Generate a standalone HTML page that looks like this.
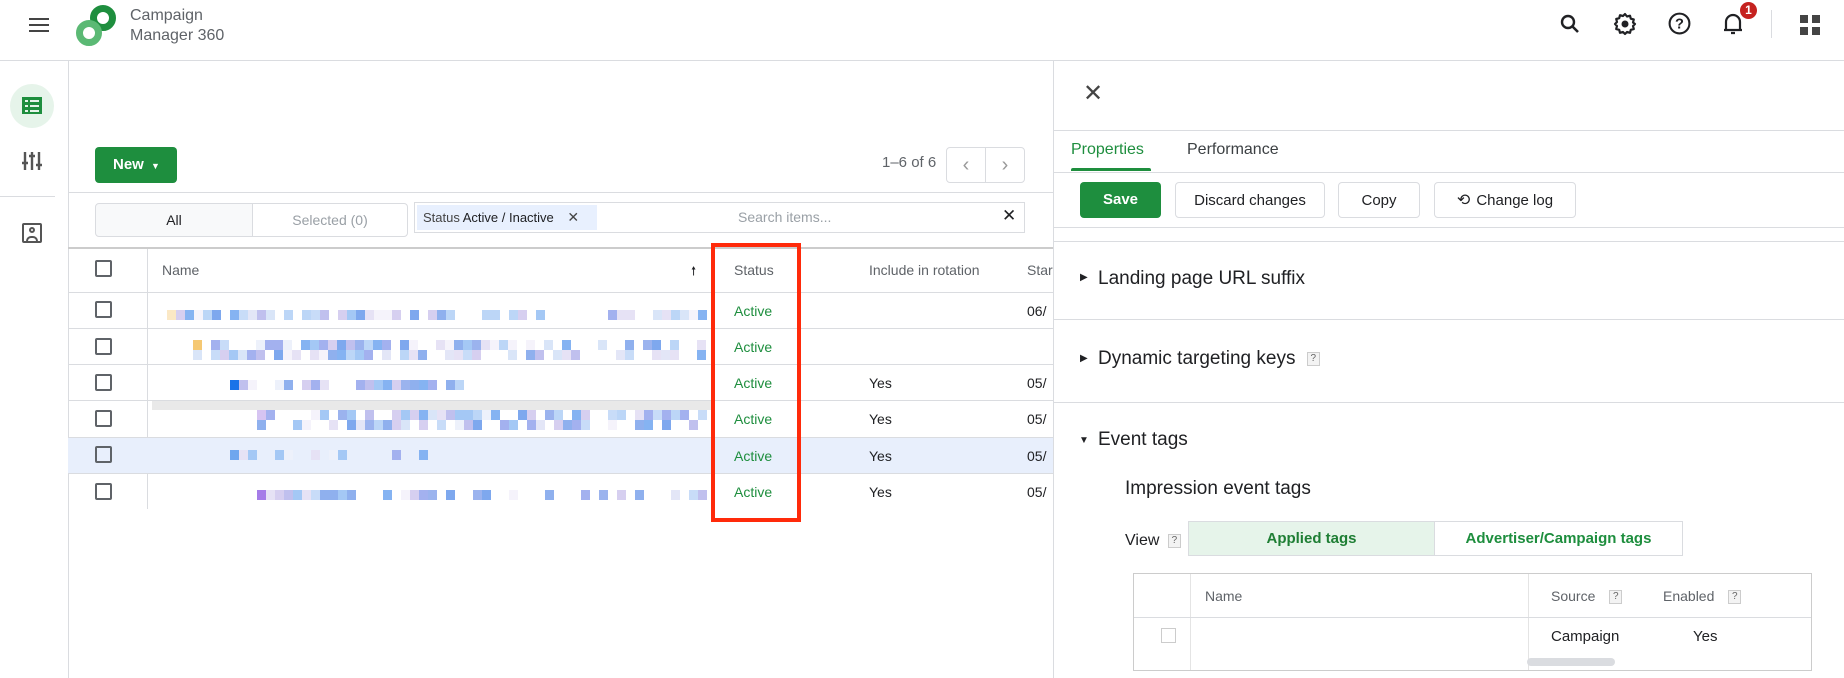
<!DOCTYPE html>
<html><head><meta charset="utf-8"><style>
*{box-sizing:border-box;margin:0;padding:0}
body{width:1844px;height:678px;overflow:hidden;background:#fff;font-family:"Liberation Sans",Arial,sans-serif;color:#202124;position:relative}
.a{position:absolute}
.hl{position:absolute;height:1px;background:#dadce0}
.vl{position:absolute;width:1px;background:#dadce0}
.cb{position:absolute;width:17px;height:17px;border:2px solid #5f6368;border-radius:2px}
.btn{position:absolute;border:1px solid #dadce0;border-radius:4px;font-size:15px;display:flex;align-items:center;justify-content:center;color:#202124;background:#fff}
.act{position:absolute;left:734px;color:#1e8e3e;font-size:14px}
.yes{position:absolute;left:869px;font-size:14px}
.dt{position:absolute;left:1027px;font-size:14px}
.q{display:inline-block;width:13px;height:14px;border:1px solid #ccc;background:#f3f3f3;font-size:10px;color:#666;text-align:center;line-height:12px;vertical-align:middle}
.px{position:absolute;height:10px}
</style></head><body>
<div class="a" style="left:29px;top:18px;width:20px;height:2px;background:#444;box-shadow:0 6px 0 #444,0 12px 0 #444"></div>
<svg class="a" style="left:74px;top:4px" width="44" height="44" viewBox="0 0 44 44"><circle cx="29" cy="14" r="9.5" fill="none" stroke="#1e8e3e" stroke-width="7"/><circle cx="15" cy="29" r="9.5" fill="none" stroke="#5bb974" stroke-width="7"/></svg>
<div class="a" style="left:130px;top:6px;font-size:16px;color:#5f6368;line-height:20px">Campaign<br>Manager 360</div>
<svg class="a" style="left:1558px;top:12px" width="24" height="24" viewBox="0 0 24 24"><circle cx="10" cy="10" r="6" fill="none" stroke="#202124" stroke-width="2.4"/><path d="M14.5 14.5L20 20" stroke="#202124" stroke-width="2.6"/></svg>
<svg class="a" style="left:1613px;top:12px" width="24" height="24" viewBox="0 0 24 24"><path d="M12 2l2 2.5 3-.8.8 3 3 .8-.8 3L22 12l-2 2 .8 3-3 .8-.8 3-3-.8L12 22l-2-2-3 .8-.8-3-3-.8.8-3L2 12l2-2-.8-3 3-.8.8-3 3 .8z" fill="none" stroke="#202124" stroke-width="2.2" stroke-linejoin="round"/><circle cx="12" cy="12" r="3.5" fill="#202124"/></svg>
<svg class="a" style="left:1667px;top:11px" width="25" height="25" viewBox="0 0 24 24"><circle cx="12" cy="12" r="9.5" fill="none" stroke="#202124" stroke-width="2"/><text x="12" y="17" font-size="14" font-weight="bold" text-anchor="middle" font-family="Liberation Sans" fill="#202124">?</text></svg>
<svg class="a" style="left:1721px;top:11px" width="24" height="26" viewBox="0 0 24 26"><path d="M5 19V11a7 7 0 0114 0v8H5zM3 19h18M10 22h4" fill="none" stroke="#202124" stroke-width="2.2"/></svg>
<div class="a" style="left:1740px;top:2px;width:17px;height:17px;border-radius:50%;background:#c5221f;color:#fff;font-size:12px;font-weight:bold;text-align:center;line-height:17px">1</div>
<div class="vl" style="left:1771px;top:10px;height:28px"></div>
<div class="a" style="left:1800px;top:15px;width:8px;height:8px;background:#444;box-shadow:12px 0 0 #444,0 12px 0 #444,12px 12px 0 #444"></div>
<div class="hl" style="left:0;top:60px;width:1844px"></div>
<div class="vl" style="left:68px;top:60px;height:618px"></div>
<div class="a" style="left:10px;top:84px;width:44px;height:44px;border-radius:50%;background:#e6f4ea"></div>
<div class="a" style="left:22px;top:97px;width:20px;height:17px;background:#1e8e3e"></div>
<div class="a" style="left:25px;top:100px;width:3px;height:2px;background:#e6f4ea;box-shadow:0 5px 0 #e6f4ea,0 10px 0 #e6f4ea"></div>
<div class="a" style="left:30px;top:100px;width:9px;height:2px;background:#e6f4ea;box-shadow:0 5px 0 #e6f4ea,0 10px 0 #e6f4ea"></div>
<svg class="a" style="left:21px;top:150px" width="22" height="22" viewBox="0 0 22 22"><path d="M4 2v18M11 2v18M18 2v18" stroke="#555" stroke-width="2.4"/><path d="M1 13h6M8 6h6M15 15h6" stroke="#555" stroke-width="2.6"/></svg>
<div class="hl" style="left:0;top:196px;width:55px"></div>
<div class="a" style="left:22px;top:223px;width:20px;height:20px;border:2px solid #555;border-radius:2px"></div>
<div class="a" style="left:29px;top:227px;width:6px;height:6px;border:2px solid #555;border-radius:50%"></div>
<div class="a" style="left:26px;top:236px;width:12px;height:5px;border:2px solid #555;border-bottom:none;border-radius:5px 5px 0 0"></div>
<div class="a" style="left:95px;top:147px;width:82px;height:36px;background:#1e8e3e;border-radius:4px;color:#fff;font-weight:bold;font-size:15px;line-height:36px;padding-left:18px">New <span style="font-size:9px;margin-left:3px">▼</span></div>
<div class="a" style="left:882px;top:154px;font-size:15px;color:#5f6368">1–6 of 6</div>
<div class="btn" style="left:946px;top:147px;width:40px;height:36px;border-radius:4px 0 0 4px;color:#999;font-size:20px">‹</div>
<div class="btn" style="left:985px;top:147px;width:40px;height:36px;border-radius:0 4px 4px 0;color:#999;font-size:20px">›</div>
<div class="hl" style="left:68px;top:192px;width:985px"></div>
<div class="a" style="left:95px;top:203px;width:158px;height:34px;background:#f8f9fa;border:1px solid #dadce0;border-radius:4px 0 0 4px;font-size:14px;text-align:center;line-height:32px">All</div>
<div class="a" style="left:252px;top:203px;width:156px;height:34px;border:1px solid #dadce0;border-radius:0 4px 4px 0;font-size:14px;color:#9aa0a6;text-align:center;line-height:32px">Selected (0)</div>
<div class="a" style="left:414px;top:202px;width:611px;height:31px;border:1px solid #dadce0"></div>
<div class="a" style="left:417px;top:205px;width:180px;height:25px;background:#e8f0fe;font-size:13px;line-height:25px;padding-left:6px;color:#444">Status <span style="color:#202124">Active / Inactive</span> <span style="margin-left:10px;font-size:14px">✕</span></div>
<div class="a" style="left:738px;top:209px;font-size:14px;color:#9aa0a6">Search items...</div>
<div class="a" style="left:1002px;top:206px;font-size:17px;color:#202124">✕</div>
<div class="hl" style="left:68px;top:247px;width:985px;background:#ccc;height:2px"></div>
<div class="vl" style="left:147px;top:249px;height:260px"></div>
<div class="cb" style="left:95px;top:260px"></div>
<div class="a" style="left:162px;top:262px;font-size:14px;color:#5f6368">Name</div>
<div class="a" style="left:691px;top:262px;font-size:12px">🠕</div>
<div class="a" style="left:734px;top:262px;font-size:14px;color:#5f6368">Status</div>
<div class="a" style="left:869px;top:262px;font-size:14px;color:#5f6368">Include in rotation</div>
<div class="a" style="left:1027px;top:262px;font-size:14px;color:#5f6368">Star</div>
<div class="a" style="left:68px;top:437px;width:643px;height:37px;background:#e8effc"></div>
<div class="a" style="left:152px;top:400px;width:559px;height:10px;background:#e9e9e9"></div>
<div class="a" style="left:711px;top:437px;width:342px;height:37px;background:#e8effc"></div>
<div class="hl" style="left:68px;top:292px;width:985px"></div>
<div class="hl" style="left:68px;top:328px;width:985px"></div>
<div class="hl" style="left:68px;top:364px;width:985px"></div>
<div class="hl" style="left:68px;top:400px;width:985px"></div>
<div class="hl" style="left:68px;top:437px;width:985px"></div>
<div class="hl" style="left:68px;top:473px;width:985px"></div>
<div class="cb" style="left:95px;top:301px"></div><div class="cb" style="left:95px;top:338px"></div><div class="cb" style="left:95px;top:374px"></div><div class="cb" style="left:95px;top:410px"></div><div class="cb" style="left:95px;top:446px"></div><div class="cb" style="left:95px;top:483px"></div>
<div class="act" style="top:303px">Active</div><div class="act" style="top:339px">Active</div><div class="act" style="top:375px">Active</div><div class="act" style="top:411px">Active</div><div class="act" style="top:448px">Active</div><div class="act" style="top:484px">Active</div>
<div class="yes" style="top:375px">Yes</div><div class="yes" style="top:411px">Yes</div><div class="yes" style="top:448px">Yes</div><div class="yes" style="top:484px">Yes</div>
<div class="dt" style="top:303px">06/</div><div class="dt" style="top:375px">05/</div><div class="dt" style="top:411px">05/</div><div class="dt" style="top:448px">05/</div><div class="dt" style="top:484px">05/</div>
<div id="pix"></div>
<div class="a" style="left:711px;top:243px;width:90px;height:279px;border:4px solid #ff2a0a"></div>
<div class="vl" style="left:1053px;top:60px;height:618px"></div>
<div class="a" style="left:1083px;top:82px;font-size:24px;color:#444;line-height:24px">✕</div>
<div class="hl" style="left:1053px;top:130px;width:791px"></div>
<div class="a" style="left:1071px;top:141px;font-size:16px;color:#1e8e3e">Properties</div>
<div class="a" style="left:1071px;top:168px;width:80px;height:3px;background:#1e8e3e;border-radius:2px 2px 0 0"></div>
<div class="a" style="left:1187px;top:141px;font-size:16px;color:#3c4043">Performance</div>
<div class="hl" style="left:1053px;top:172px;width:791px"></div>
<div class="a" style="left:1080px;top:182px;width:81px;height:36px;background:#1e8e3e;border-radius:4px;color:#fff;font-weight:bold;font-size:15px;text-align:center;line-height:36px">Save</div>
<div class="btn" style="left:1175px;top:182px;width:150px;height:36px">Discard changes</div>
<div class="btn" style="left:1338px;top:182px;width:82px;height:36px">Copy</div>
<div class="btn" style="left:1434px;top:182px;width:142px;height:36px"><span style="font-size:16px;margin-right:6px">⟲</span>Change log</div>
<div class="hl" style="left:1053px;top:227px;width:791px"></div>
<div class="hl" style="left:1053px;top:241px;width:791px"></div>
<div class="a" style="left:1080px;top:272px;font-size:10px">▶</div>
<div class="a" style="left:1098px;top:268px;font-size:19px">Landing page URL suffix</div>
<div class="hl" style="left:1053px;top:319px;width:791px"></div>
<div class="a" style="left:1080px;top:353px;font-size:10px">▶</div>
<div class="a" style="left:1098px;top:348px;font-size:19px">Dynamic targeting keys <span class="q" style="margin-left:6px">?</span></div>
<div class="hl" style="left:1053px;top:402px;width:791px"></div>
<div class="a" style="left:1079px;top:435px;font-size:10px">▼</div>
<div class="a" style="left:1098px;top:429px;font-size:19px">Event tags</div>
<div class="a" style="left:1125px;top:478px;font-size:19px">Impression event tags</div>
<div class="a" style="left:1125px;top:532px;font-size:16px">View <span class="q" style="margin-left:4px">?</span></div>
<div class="a" style="left:1188px;top:521px;width:247px;height:35px;background:#e6f4ea;border:1px solid #dadce0;color:#1e7e34;font-size:15px;font-weight:bold;text-align:center;line-height:33px">Applied tags</div>
<div class="a" style="left:1434px;top:521px;width:249px;height:35px;border:1px solid #dadce0;color:#1e8e3e;font-size:15px;font-weight:bold;text-align:center;line-height:33px">Advertiser/Campaign tags</div>
<div class="a" style="left:1133px;top:573px;width:679px;height:98px;border:1px solid #ccc"></div>
<div class="vl" style="left:1190px;top:574px;height:96px;background:#e4e4e4"></div>
<div class="vl" style="left:1528px;top:574px;height:96px;background:#e4e4e4"></div>
<div class="hl" style="left:1134px;top:617px;width:677px"></div>
<div class="a" style="left:1205px;top:588px;font-size:14px;color:#5f6368">Name</div>
<div class="a" style="left:1551px;top:588px;font-size:14px;color:#5f6368">Source <span class="q" style="margin-left:10px">?</span></div>
<div class="a" style="left:1663px;top:588px;font-size:14px;color:#5f6368">Enabled <span class="q" style="margin-left:10px">?</span></div>
<div class="a" style="left:1161px;top:628px;width:15px;height:15px;border:1px solid #ccc"></div>
<div class="a" style="left:1551px;top:628px;font-size:15px">Campaign</div>
<div class="a" style="left:1693px;top:628px;font-size:15px">Yes</div>
<div class="a" style="left:1527px;top:658px;width:88px;height:8px;border-radius:4px;background:#dadce0"></div>
<script>
var C=["#a3b1ef","#8fb0ee","#c0c0ee","#d6cff0","#a4c8f5","#e6e2f5","#bcd6f7","#85b3f2","#e3e6f7","#9bb3ee","#c8dcf8","#7ea8ee","#edf1fb","#f5f3fb","#d9e5f8"];
var rows=[[167,310,1],[193,340,2],[230,380,1],[257,410,2],[230,450,1],[257,490,1]];
var h="",s=7;
function r(){s=(s*9301+49297)%233280;return s/233280;}
rows.forEach(function(R,i){for(var l=0;l<R[2];l++){var x=R[0],y=R[1]+l*10;for(var k=0;x<706&&k<(i==2?27:(i==4?22:80));k++){if(r()<0.6||k==0){var c=C[Math.floor(r()*C.length)];if(k==0&&l==0){c=["#fbe8c5","#f5c873","#1a73e8","#d6c4f2","#6fa6ee","#a57ce8"][i];}h+='<div class="px" style="left:'+x+'px;top:'+y+'px;width:9px;background:'+c+'"></div>';}x+=9;}}});
document.getElementById("pix").innerHTML=h;
</script>
</body></html>
